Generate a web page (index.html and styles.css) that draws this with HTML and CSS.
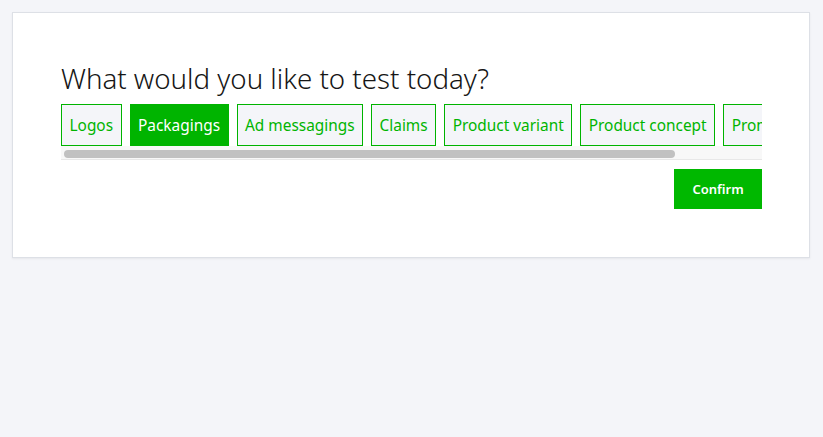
FILE: index.html
```html
<!DOCTYPE html>
<html lang="en">
<head>
    <meta charset="UTF-8">
    <meta name="viewport" content="width=device-width, initial-scale=1.0">
    <title>Choose a test</title>
    <link rel="stylesheet" href="styles.css">
</head>
<body>
    <div class="card">
        <h1 class="title">What would you like to test today?</h1>
        <div class="chips" id="chips">
            <button class="chip">Logos</button>
            <button class="chip selected">Packagings</button>
            <button class="chip">Ad messagings</button>
            <button class="chip">Claims</button>
            <button class="chip">Product variant</button>
            <button class="chip">Product concept</button>
            <button class="chip">Promo</button>
        </div>
        <div class="scrollbar">
            <div class="thumb"></div>
        </div>
        <div class="actions">
            <button class="confirm">Confirm</button>
        </div>
    </div>
</body>
</html>
```

FILE: styles.css
```css
body {
    margin: 0;
    padding: 12px 13px 12px 12px;
    background-color: #f4f5f9;
    font-family: "Noto Sans", "Open Sans", sans-serif;
}

.card {
    background-color: #fff;
    border: 1px solid #dde0e6;
    box-shadow: 0 1px 2px rgba(0, 0, 0, 0.06);
    padding: 47px 47px 48px 48px;
}

.title {
    margin: 0 0 8px;
    font-size: 27.7px;
    font-weight: 300;
    line-height: 36px;
    color: #161616;
}

.chips {
    display: flex;
    gap: 8px;
    overflow: hidden;
}

.chip {
    flex: none;
    height: 42px;
    padding: 0 7.5px;
    border: 1px solid #00b400;
    background-color: #f4f5f9;
    color: #00b400;
    font-family: inherit;
    font-size: 15.4px;
    cursor: pointer;
}

.chip.selected {
    background-color: #00b400;
    color: #fff;
}

/* fake horizontal scrollbar under the chips */
.scrollbar {
    height: 14px;
    background-color: #f8f8f8;
    border-bottom: 1px solid #e8e8e8;
    box-sizing: border-box;
    padding: 4px 0 0 3px;
}

.thumb {
    width: 611px;
    height: 8px;
    border-radius: 4px;
    background-color: #c1c1c1;
}

.actions {
    display: flex;
    justify-content: flex-end;
    margin-top: 9px;
}

.confirm {
    width: 88px;
    height: 40px;
    border: none;
    background-color: #00b800;
    color: #fff;
    font-family: inherit;
    font-size: 13px;
    font-weight: 600;
    cursor: pointer;
}
```
